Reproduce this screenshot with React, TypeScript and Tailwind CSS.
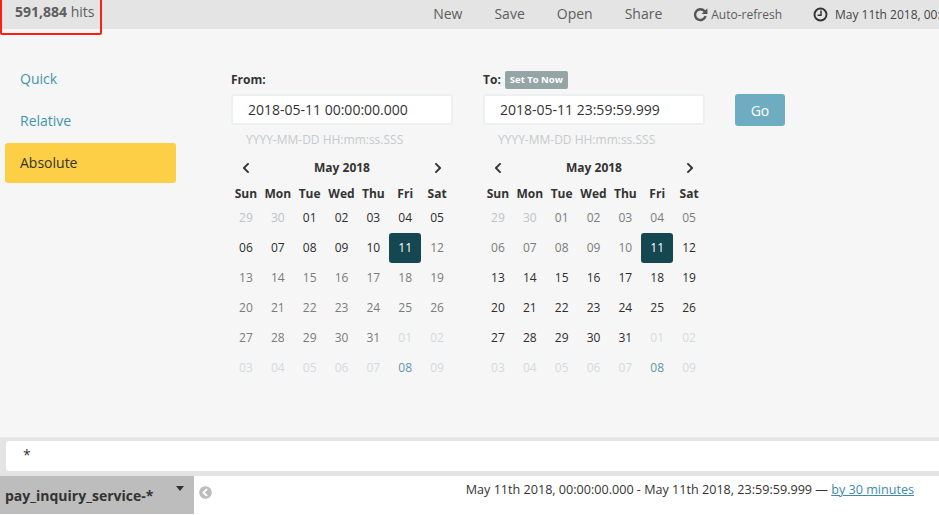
import { FaChevronCircleLeft, FaChevronLeft, FaChevronRight } from "react-icons/fa";

const DAYS = ["Sun", "Mon", "Tue", "Wed", "Thu", "Fri", "Sat"];
const CELLS = [
  "29", "30", "01", "02", "03", "04", "05",
  "06", "07", "08", "09", "10", "11", "12",
  "13", "14", "15", "16", "17", "18", "19",
  "20", "21", "22", "23", "24", "25", "26",
  "27", "28", "29", "30", "31", "01", "02",
  "03", "04", "05", "06", "07", "08", "09",
];

const SELECTED = 12;

// From: days up to the 11th are dark. To: days from the 11th are dark.
const cellColor = (i: number, from: boolean) => {
  if (i < 2) return "text-[#bcc3c6]";
  if (i === 40) return "text-[#5f97aa]";
  if (i >= 33) return "text-[#d5dadc]";
  const dark = from ? i < SELECTED : i > SELECTED;
  return dark ? "text-[#2d2d2d]" : "text-[#7b7b7b]";
};

const RepeatIcon = () => (
  <svg width="15" height="15" viewBox="0 0 15 15" className="shrink-0">
    <path d="M11.6 4.2A5.4 5.4 0 1 0 12.6 9.2" fill="none" stroke="#555" strokeWidth="2.4" />
    <path d="M14.4 1.2V7H8.6Z" fill="#555" />
  </svg>
);

const ClockIcon = () => (
  <svg width="15" height="15" viewBox="0 0 15 15" className="shrink-0">
    <circle cx="7.5" cy="7.5" r="6" fill="none" stroke="#333" strokeWidth="1.9" />
    <path d="M8 3.6V8.2H4.6" fill="none" stroke="#333" strokeWidth="1.5" />
  </svg>
);

const Calendar = ({ from }: { from: boolean }) => (
  <div className="w-[222px]">
    <div className="flex h-[28px] items-center justify-between px-[9px] text-[#333]">
      <FaChevronLeft size={12} />
      <span className="text-[12px] font-bold">May 2018</span>
      <FaChevronRight size={12} />
    </div>
    <div className="mt-[3px] grid w-[223px] -ml-[1px] grid-cols-7">
      {DAYS.map((d) => (
        <div key={d} className="h-[18px] text-center text-[12px] leading-[18px] font-bold text-[#333]">
          {d}
        </div>
      ))}
      {CELLS.map((c, i) => (
        <div
          key={i}
          className={`h-[30px] text-center text-[12px] leading-[30px] ${
            i === SELECTED ? "rounded-[3px] bg-[#154751] text-white" : cellColor(i, from)
          }`}
        >
          {c}
        </div>
      ))}
    </div>
  </div>
);

const DateColumn = ({ from, value }: { from: boolean; value: string }) => (
  <div className="w-[222px]">
    <div className="flex h-[22px] items-center gap-[4px] text-[12px] font-bold text-[#333]">
      {from ? "From:" : "To:"}
      {!from && (
        <span className="rounded-[2px] bg-[#95a5a6] px-[5px] py-[2px] text-[9.5px] leading-[14px] text-white">
          Set To Now
        </span>
      )}
    </div>
    <div className="mt-[3px] h-[31px] rounded-[3px] border-2 border-[#ecf0f1] bg-white pl-[15px] text-[14px] leading-[27px] text-[#333]">
      {value}
    </div>
    <div className="mt-[7px] h-[16px] pl-[15px] text-[12px] leading-[16px] text-[#c5cacd]">YYYY-MM-DD HH:mm:ss.SSS</div>
    <div className="mt-[6px]">
      <Calendar from={from} />
    </div>
  </div>
);

export default function App() {
  return (
    <div className="relative h-[515px] w-[939px] overflow-hidden bg-white font-['Open_Sans',sans-serif]">
      <div className="flex h-[29px] items-center bg-[#e4e4e4] text-[#5d5d5d]">
        <div className="self-start pl-[15px] text-[14px] leading-[24px]">
          <b className="font-bold">591,884</b> hits
        </div>
        <div className="ml-auto flex items-center whitespace-nowrap pb-[2px] text-[14px]">
          <span className="mr-[32px]">New</span>
          <span className="mr-[32px]">Save</span>
          <span className="mr-[32px]">Open</span>
          <span className="mr-[31px]">Share</span>
          <span className="mr-[31px] mt-[2px] flex items-center gap-[3px] text-[12px]">
            <RepeatIcon />
            Auto-refresh
          </span>
          <span className="mt-[2px] flex w-[126px] items-center gap-[7px] overflow-hidden text-[12px] text-[#444]">
            <ClockIcon />
            May 11th 2018, 00:00:00.000
          </span>
        </div>
      </div>

      <div className="flex h-[408px] bg-[#f6f6f6] pt-[30px]">
        <div className="ml-[5px] flex w-[171px] flex-col gap-[2px] text-[14px]">
          <div className="h-[40px] pl-[15px] leading-[40px] text-[#3f94ae]">Quick</div>
          <div className="h-[40px] pl-[15px] leading-[40px] text-[#3f94ae]">Relative</div>
          <div className="h-[40px] rounded-[3px] bg-[#fccf46] pl-[15px] leading-[40px] text-[#333]">Absolute</div>
        </div>
        <div className="ml-[55px] mt-[10px] flex items-start gap-[30px]">
          <DateColumn from value="2018-05-11 00:00:00.000" />
          <DateColumn from={false} value="2018-05-11 23:59:59.999" />
          <button className="mt-[25px] h-[32px] w-[50px] rounded-[3px] bg-[#6eacc2] text-[14px] text-white">Go</button>
        </div>
      </div>

      <div className="h-[39px] border-t border-[#e9e9e9] bg-[#e4e4e4] pl-[6px] pt-[3px]">
        <div className="h-[30px] rounded-l-[3px] bg-white pl-[17px] text-[14px] leading-[28px] text-[#333]">*</div>
      </div>

      <div className="flex h-[38px] bg-white">
        <div className="relative w-[194px] bg-[#bdbdbd] pl-[5px] pt-[9px] text-[14px] leading-[22px] font-bold text-[#333]">
          pay_inquiry_service-*
          <span className="absolute left-[176px] top-[10px] h-0 w-0 border-x-[4px] border-t-[5px] border-x-transparent border-t-[#333]" />
        </div>
        <FaChevronCircleLeft size={13} className="ml-[5px] mt-[10px] text-[#bcbcbc]" />
        <div className="ml-auto pr-[25px] pt-[5px] text-[12.6px] leading-[18px] text-[#333]">
          May 11th 2018, 00:00:00.000 - May 11th 2018, 23:59:59.999 — <span className="text-[#3f8aa6] underline">by 30 minutes</span>
        </div>
      </div>

      <div className="absolute -top-[4px] left-0 h-[39px] w-[102px] rounded-[2px] border-[2px] border-[#ff1e12]" />
    </div>
  );
}
